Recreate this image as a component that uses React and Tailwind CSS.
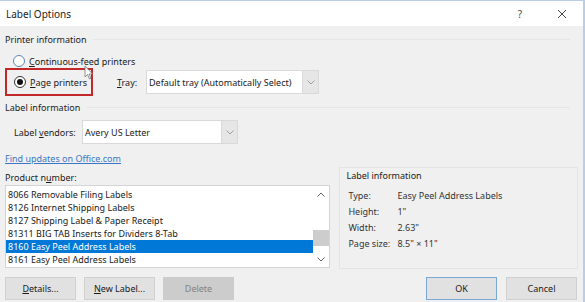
import React from 'react';

const Chevron = ({ up = false, className = '' }) => (
    <svg width="8" height="5" viewBox="0 0 8 5" className={className}>
        <path
            d={up ? 'M0.5 4.5 L4 1 L7.5 4.5' : 'M0.5 0.5 L4 4 L7.5 0.5'}
            fill="none"
            stroke="currentColor"
            strokeWidth="1"
        />
    </svg>
);

const Radio = ({ checked }) => (
    <span
        className={`flex items-center justify-center w-[12px] h-[12px] rounded-full bg-white border ${
            checked ? 'border-[#333]' : 'border-[#5b86b8]'
        }`}
    >
        {checked && <span className="w-[6px] h-[6px] rounded-full bg-[#111]" />}
    </span>
);

const Select = ({ value, width }) => (
    <div className={`flex h-[24px] bg-white border border-[#d9d9d9] ${width}`}>
        <div className="flex-1 flex items-center pl-[2px]">{value}</div>
        <div className="w-[16px] flex items-center justify-center bg-[#e6e6e6] border-l border-[#d9d9d9] text-[#a0a0a0]">
            <Chevron />
        </div>
    </div>
);

const Button = ({ children, disabled, primary }) => (
    <div
        className={`w-[71px] h-[23px] flex items-center justify-center border ${
            disabled
                ? 'bg-[#cccccc] border-[#cccccc] text-[#838383]'
                : primary
                ? 'bg-[#e1e1e1] border-[#7aa7d8]'
                : 'bg-[#e1e1e1] border-[#d0d0d0]'
        }`}
    >
        {children}
    </div>
);

const products = [
    '8066 Removable Filing Labels',
    '8126 Internet Shipping Labels',
    '8127 Shipping Label & Paper Receipt',
    '81311 BIG TAB Inserts for Dividers 8-Tab',
    '8160 Easy Peel Address Labels',
    '8161 Easy Peel Address Labels',
];

const details = [
    ['Type:', 'Easy Peel Address Labels'],
    ['Height:', '1"'],
    ['Width:', '2.63"'],
    ['Page size:', '8.5" × 11"'],
];

export default function App() {
    return (
        <div
            className="relative w-[585px] h-[302px] overflow-hidden bg-[#f0f0f0] text-[#1a1a1a] text-[9px] leading-none whitespace-nowrap border-t border-r-2 border-[#b9cde6]"
            style={{ fontFamily: '"Noto Sans", "Open Sans", sans-serif' }}
        >
            {/* title bar */}
            <div className="h-[25px] bg-white flex items-center pl-[6px]">
                <span className="text-[10px] text-[#222]">Label Options</span>
                <span className="ml-auto mr-[35px] text-[10px] text-[#444]">?</span>
                <span className="mr-[16px] text-[#444]">
                    <svg width="10" height="10" viewBox="0 0 10 10">
                        <path d="M1 1 L9 9 M9 1 L1 9" stroke="currentColor" strokeWidth="1" />
                    </svg>
                </span>
            </div>

            <div className="px-[5px]">
                {/* printer information */}
                <div className="mt-[7px] h-[12px] flex items-center">
                    <span>Printer information</span>
                    <div className="flex-1 ml-[6px] mr-[8px] h-px bg-[#e6e6e6]" />
                </div>
                <div className="mt-[9px] h-[14px] flex items-center pl-[8px] gap-[4px]">
                    <Radio />
                    <span>
                        <span className="underline">C</span>ontinuous-feed printers
                    </span>
                </div>
                <div className="flex items-center">
                    <div className="w-[88px] h-[28px] border-2 border-[#c0282a] flex items-center pl-[7px] gap-[4px]">
                        <Radio checked />
                        <span>
                            <span className="underline">P</span>age printers
                        </span>
                    </div>
                    <span className="ml-[24px] w-[29px]">
                        <span className="underline">T</span>ray:
                    </span>
                    <Select value="Default tray (Automatically Select)" width="w-[173px]" />
                </div>

                {/* label information */}
                <div className="mt-[5px] h-[12px] flex items-center">
                    <span>Label information</span>
                    <div className="flex-1 ml-[6px] mr-[8px] h-px bg-[#e6e6e6]" />
                </div>
                <div className="mt-[7px] flex items-center pl-[9px]">
                    <span className="w-[68px]">
                        Label <span className="underline">v</span>endors:
                    </span>
                    <Select value="Avery US Letter" width="w-[156px]" />
                </div>

                <div className="flex mt-[2px]">
                    <div className="w-[326px]">
                        <div className="mt-[6px] h-[12px] flex items-center">
                            <span className="text-[#3a76c3] underline">Find updates on Office.com</span>
                        </div>
                        <div className="mt-[7px] h-[12px] flex items-center">
                            <span>
                                Product n<span className="underline">u</span>mber:
                            </span>
                        </div>
                        <div className="mt-[2px] h-[83px] bg-white border border-[#d4d4d4] flex">
                            <div className="flex-1 pt-[2px]">
                                {products.map((p) => (
                                    <div
                                        key={p}
                                        className={`h-[13px] flex items-center pl-[2px] ${
                                            p.startsWith('8160 ') ? 'bg-[#0078d7] text-white' : ''
                                        }`}
                                    >
                                        {p}
                                    </div>
                                ))}
                            </div>
                            <div className="w-[16px] flex flex-col items-center text-[#606060]">
                                <div className="h-[17px] flex items-center justify-center">
                                    <Chevron up />
                                </div>
                                <div className="flex-1 w-full flex flex-col justify-end pb-[5px]">
                                    <div className="h-[16px] w-full bg-[#cdcdcd]" />
                                </div>
                                <div className="h-[16px] flex items-center justify-center">
                                    <Chevron />
                                </div>
                            </div>
                        </div>
                    </div>

                    <div className="ml-[9px] mt-[21px] w-[239px] h-[102px] border border-[#e4e4e4] pl-[6px]">
                        <div className="mt-[1px] h-[12px] flex items-center">Label information</div>
                        <div className="mt-[8px] flex flex-col gap-[4px] pl-[2px]">
                            {details.map(([k, v]) => (
                                <div key={k} className="h-[12px] flex items-center">
                                    <span className="w-[49px] text-[#333]">{k}</span>
                                    <span className="text-[#333]">{v}</span>
                                </div>
                            ))}
                        </div>
                    </div>
                </div>

                {/* buttons */}
                <div className="mt-[8px] flex items-center">
                    <div className="flex gap-[8px]">
                        <Button>
                            <span>
                                <span className="underline">D</span>etails...
                            </span>
                        </Button>
                        <Button>
                            <span>
                                <span className="underline">N</span>ew Label...
                            </span>
                        </Button>
                        <Button disabled>Delete</Button>
                    </div>
                    <div className="ml-auto mr-[1px] flex gap-[9px]">
                        <Button primary>OK</Button>
                        <Button>Cancel</Button>
                    </div>
                </div>
            </div>

            {/* mouse cursor */}
            <svg className="absolute left-[84px] top-[64px]" width="10" height="15" viewBox="0 0 10 15">
                <path d="M1 1 L1 12 L3.5 9.5 L5.5 14 L7 13.3 L5 9 L8.5 9 Z" fill="#fff" stroke="#777" strokeWidth="0.8" />
            </svg>
        </div>
    );
}
